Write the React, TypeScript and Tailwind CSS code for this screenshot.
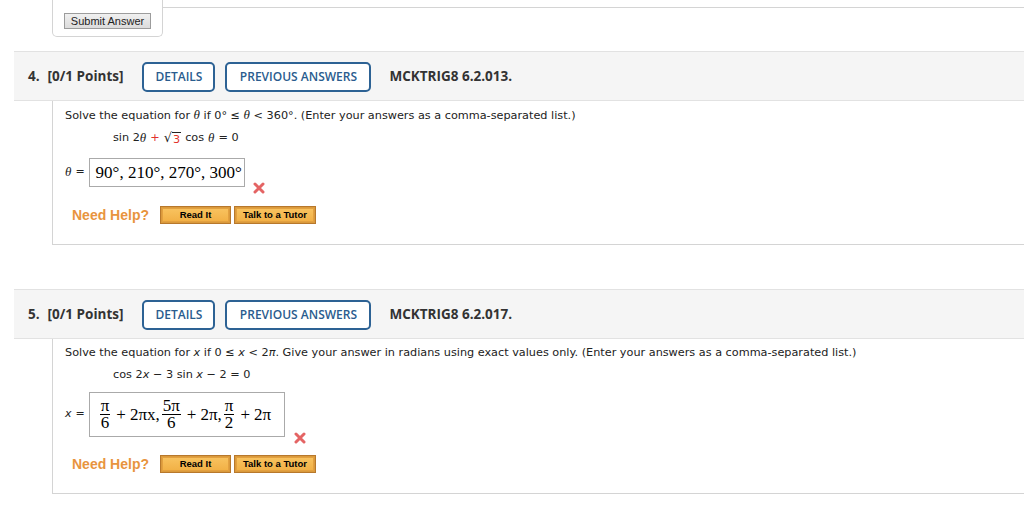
import React from 'react';

const body = { fontFamily: '"DejaVu Sans", Verdana, sans-serif' };
const serif = { fontFamily: '"Liberation Serif", "Times New Roman", serif' };
const open = { fontFamily: '"Open Sans", Arial, sans-serif' };
const arial = { fontFamily: '"Liberation Sans", Arial, sans-serif' };

const Theta = ({ className }: { className?: string }) => (
  <span className={`italic text-[13px] ${className ?? ''}`} style={serif}>θ</span>
);

const RedX = ({ className }: { className?: string }) => (
  <svg width="12" height="12" viewBox="0 0 12 12" className={className}>
    <path d="M2 2 L10 10 M10 2 L2 10" stroke="#e46464" strokeWidth="3" strokeLinecap="round" />
  </svg>
);

const HeaderButton = ({ label, width }: { label: string; width: string }) => (
  <div
    className={`${width} h-[30px] flex items-center justify-center border-2 border-[#2d6294] rounded-[5px] bg-white text-[12px] font-semibold text-[#2a5c8e]`}
    style={open}
  >
    {label}
  </div>
);

const QuestionHeader = ({ num, code }: { num: number; code: string }) => (
  <div className="ml-[14px] h-[50px] bg-[#f5f5f5] border-y border-[#e2e2e2] flex items-center pt-[1px]" style={open}>
    <span className="ml-[14px] text-[13.5px] font-bold text-[#333]">{num}.</span>
    <span className="ml-[8px] text-[13.5px] font-bold text-[#333]">[0/1 Points]</span>
    <div className="ml-[19px] flex gap-[10px]">
      <HeaderButton label="DETAILS" width="w-[73px]" />
      <HeaderButton label="PREVIOUS ANSWERS" width="w-[146px]" />
    </div>
    <span className="ml-[18px] text-[13.5px] font-bold text-[#333]">{code}</span>
  </div>
);

const OrangeButton = ({ label, width }: { label: string; width: string }) => (
  <div className={`${width} h-[18px] border border-[#b8782c] bg-[#d99a3c] p-[1px]`}>
    <div
      className="h-full flex items-center justify-center bg-gradient-to-b from-[#f8c25e] to-[#f2b146] border border-[#e3a040] text-[9.5px] font-bold text-black"
      style={arial}
    >
      {label}
    </div>
  </div>
);

const NeedHelp = () => (
  <div className="mt-[12px] ml-[7px] h-[18px] flex items-center">
    <span className="text-[14px] font-bold text-[#e8943e]" style={arial}>Need Help?</span>
    <div className="ml-[11px] flex gap-[3px]">
      <OrangeButton label="Read It" width="w-[71px]" />
      <OrangeButton label="Talk to a Tutor" width="w-[82px]" />
    </div>
  </div>
);

const Frac = ({ n, d }: { n: string; d: string }) => (
  <span className="inline-flex flex-col items-center mx-[2px] align-middle leading-[16px]">
    <span className="px-[1px]">{n}</span>
    <span className="w-full border-t border-black"></span>
    <span className="px-[1px]">{d}</span>
  </span>
);

export default function App() {
  return (
    <div className="w-[1024px] h-[522px] bg-white overflow-hidden text-[#222]" style={body}>
      {/* end of previous question */}
      <div className="flex">
        <div className="ml-[52px] w-[111px] h-[37px] border-l border-b border-r border-[#d4d4d4] rounded-b-[5px] flex items-start pl-[11px] pt-[13px]">
          <div
            className="w-[87px] h-[16px] flex items-center justify-center border border-[#9c9c9c] bg-gradient-to-b from-[#f0f0f0] to-[#dcdcdc] text-[11px] text-[#222]"
            style={arial}
          >
            Submit Answer
          </div>
        </div>
        <div className="flex-1 mt-[7px] border-t border-[#d4d4d4]"></div>
      </div>

      {/* question 4 */}
      <div className="mt-[14px]">
        <QuestionHeader num={4} code="MCKTRIG8 6.2.013." />
        <div className="ml-[52px] border-l border-b border-[#d4d4d4] pl-[12px] pt-[6px] pb-[20px]">
          <div className="text-[11.25px] leading-[16px]">
            Solve the equation for <Theta /> if 0° ≤ <Theta /> &lt; 360°. (Enter your answers as a comma-separated list.)
          </div>
          <div className="mt-[6px] ml-[48px] text-[11.25px] leading-[16px] flex items-center">
            <span>sin 2</span><Theta />
            <span className="text-[#e2312a] mx-[4px]">+</span>
            <span className="inline-flex items-end">
              <span className="text-[13px]">√</span>
              <span className="border-t border-[#222] text-[#e2312a] px-[1px] leading-[13px]">3</span>
            </span>
            <span className="ml-[4px]">cos</span><Theta className="ml-[4px]" />
            <span className="ml-[4px]">= 0</span>
          </div>
          <div className="mt-[12px] h-[36px] flex items-start">
            <div className="h-[28px] flex items-center gap-[4px]">
              <Theta /><span className="text-[11px]">=</span>
            </div>
            <div className="ml-[4px] w-[156px] h-[29px] border border-[#aaa] flex items-center pl-[6px] text-[17px] text-black" style={serif}>
              90°, 210°, 270°, 300°
            </div>
            <RedX className="ml-[8px] mt-[24px]" />
          </div>
          <NeedHelp />
        </div>
      </div>

      {/* question 5 */}
      <div className="mt-[44px]">
        <QuestionHeader num={5} code="MCKTRIG8 6.2.017." />
        <div className="ml-[52px] border-l border-b border-[#d4d4d4] pl-[12px] pt-[6px] pb-[20px]">
          <div className="text-[11.25px] leading-[16px]">
            Solve the equation for <i>x</i> if 0 ≤ <i>x</i> &lt; 2<i>π</i>. Give your answer in radians using exact values only. (Enter your answers as a comma-separated list.)
          </div>
          <div className="mt-[6px] ml-[48px] text-[11.25px] leading-[16px]">
            cos 2<i>x</i> − 3 sin <i>x</i> − 2 = 0
          </div>
          <div className="mt-[9px] h-[51px] flex items-start">
            <div className="h-[45px] flex items-center text-[11px]">
              <i>x</i><span className="ml-[4px]">=</span>
            </div>
            <div className="ml-[4px] w-[196px] h-[45px] border border-[#aaa] flex items-center pl-[8px] text-[17px] text-black whitespace-nowrap" style={serif}>
              <Frac n="π" d="6" />
              <span className="mx-[4px]">+</span>2πx,
              <Frac n="5π" d="6" />
              <span className="mx-[4px]">+</span>2π,
              <Frac n="π" d="2" />
              <span className="mx-[4px]">+</span>2π
            </div>
            <RedX className="ml-[9px] mt-[40px]" />
          </div>
          <NeedHelp />
        </div>
      </div>
    </div>
  );
}
